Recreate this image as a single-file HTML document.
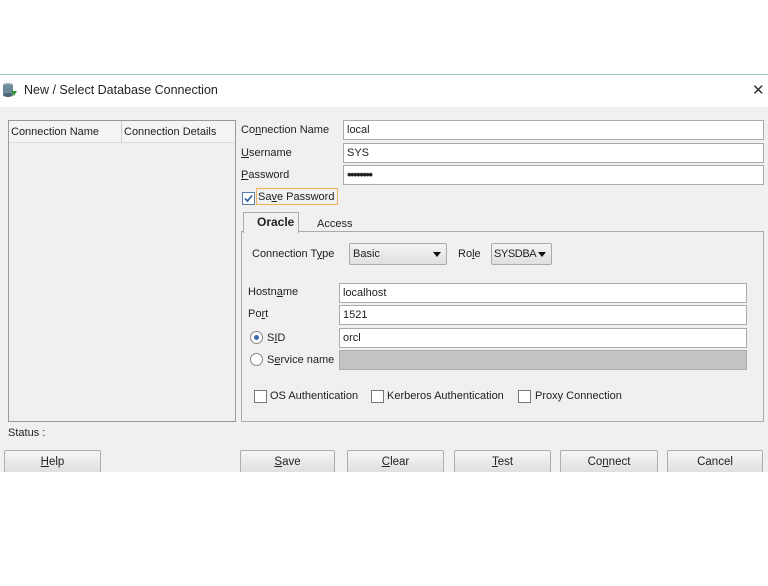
<!DOCTYPE html>
<html><head><style>
body{margin:0;width:768px;height:586px;background:#fff;position:relative;overflow:hidden;font-family:"Liberation Sans",sans-serif;font-size:11px;color:#222}
.a{position:absolute}
.f{position:absolute;background:#fff;border:1px solid #aaa;box-sizing:border-box;padding:1px 3px;font-size:11px;line-height:17px}
.l{position:absolute;font-size:11px}
.btn{position:absolute;top:450px;height:24px;box-sizing:border-box;border:1px solid #adadad;border-radius:2px;background:linear-gradient(#f6f6f6,#dedede);text-align:center;line-height:22px;font-size:11.5px}
.cb{position:absolute;width:12px;height:12px;border:1px solid #777;background:#fff;box-sizing:border-box}
.cmb{position:absolute;height:22px;box-sizing:border-box;border:1px solid #aaa;border-radius:2px;background:linear-gradient(#f4f4f4,#e0e0e0);padding:4px 3px;font-size:11px}
.cmb:after{content:"";position:absolute;right:5px;top:8px;border-left:4px solid transparent;border-right:4px solid transparent;border-top:5px solid #111}
u{text-decoration:underline}
</style></head><body>
<div class="a" style="left:0;top:74px;width:768px;height:1px;background:#9cc8c8"></div>
<svg class="a" style="left:2px;top:82px" width="16" height="16"><ellipse cx="6" cy="3" rx="5" ry="2" fill="#8aa"/><rect x="1" y="3" width="10" height="10" fill="#6e8a9a"/><ellipse cx="6" cy="13" rx="5" ry="2" fill="#4d6676"/><path d="M9 9h6l-3 5z" fill="#2a9a3a"/></svg>
<div class="l" style="left:24px;top:83px;font-size:12.5px">New / Select Database Connection</div>
<div class="l" style="left:752px;top:81px;font-size:15px;color:#333">✕</div>
<div class="a" style="left:0;top:107px;width:768px;height:365px;background:#f0f0f0"></div>

<div class="a" style="left:8px;top:120px;width:228px;height:302px;border:1px solid #999;box-sizing:border-box;background:#f0f0f0"></div>
<div class="a" style="left:9px;top:121px;width:226px;height:21px;background:#f4f4f4;border-bottom:1px solid #ddd"></div>
<div class="a" style="left:121px;top:121px;width:1px;height:21px;background:#ccc"></div>
<div class="l" style="left:11px;top:126px">Connection Name</div>
<div class="l" style="left:124px;top:126px">Connection Details</div>

<div class="l" style="left:241px;top:124px">Co<u>n</u>nection Name</div>
<div class="l" style="left:241px;top:147px"><u>U</u>sername</div>
<div class="l" style="left:241px;top:169px"><u>P</u>assword</div>
<div class="f" style="left:343px;top:120px;width:421px;height:20px">local</div>
<div class="f" style="left:343px;top:143px;width:421px;height:20px">SYS</div>
<div class="f" style="left:343px;top:165px;width:421px;height:20px;font-weight:bold;font-size:13px;letter-spacing:-1.5px;line-height:16px">••••••••</div>
<div class="cb" style="left:242px;top:192px;width:13px;height:13px;border-color:#5a7fa8"></div>
<svg class="a" style="left:243px;top:193px" width="11" height="11"><path d="M2 5.5l2.5 2.5L9 2.5" stroke="#2a5fa0" stroke-width="1.6" fill="none"/></svg>
<div class="a" style="left:256px;top:188px;width:82px;height:17px;border:1px solid #f0b060;box-sizing:border-box"></div>
<div class="l" style="left:258px;top:191px">Sa<u>v</u>e Password</div>

<div class="a" style="left:241px;top:231px;width:523px;height:191px;border:1px solid #aaa;box-sizing:border-box"></div>
<div class="a" style="left:243px;top:212px;width:56px;height:21px;border:1px solid #aaa;border-bottom:none;box-sizing:border-box;background:#f0f0f0"></div>
<div class="l" style="left:257px;top:215px;font-weight:bold;font-size:12px">Oracle</div>
<div class="l" style="left:317px;top:218px">Access</div>

<div class="l" style="left:252px;top:248px">Connection T<u>y</u>pe</div>
<div class="cmb" style="left:349px;top:243px;width:98px">Basic</div>
<div class="l" style="left:458px;top:248px">Ro<u>l</u>e</div>
<div class="cmb" style="left:491px;top:243px;width:61px;padding-left:2px;letter-spacing:-0.4px">SYSDBA</div>

<div class="l" style="left:248px;top:286px">Hostn<u>a</u>me</div>
<div class="l" style="left:248px;top:308px">Po<u>r</u>t</div>
<div class="a" style="left:250px;top:331px;width:11px;height:11px;border:1px solid #888;border-radius:50%;background:#fff"></div>
<div class="a" style="left:254px;top:335px;width:5px;height:5px;border-radius:50%;background:#3a6fb0"></div>
<div class="l" style="left:267px;top:332px">S<u>I</u>D</div>
<div class="a" style="left:250px;top:353px;width:11px;height:11px;border:1px solid #888;border-radius:50%;background:#fff"></div>
<div class="l" style="left:267px;top:354px">S<u>e</u>rvice name</div>
<div class="f" style="left:339px;top:283px;width:408px;height:20px">localhost</div>
<div class="f" style="left:339px;top:305px;width:408px;height:20px">1521</div>
<div class="f" style="left:339px;top:328px;width:408px;height:20px">orcl</div>
<div class="f" style="left:339px;top:350px;width:408px;height:20px;background:#c4c4c4"></div>

<div class="cb" style="left:254px;top:390px;width:13px;height:13px"></div>
<div class="l" style="left:270px;top:390px">OS Authentication</div>
<div class="cb" style="left:371px;top:390px;width:13px;height:13px"></div>
<div class="l" style="left:387px;top:390px">Kerberos Authentication</div>
<div class="cb" style="left:518px;top:390px;width:13px;height:13px"></div>
<div class="l" style="left:535px;top:390px">Proxy Connection</div>

<div class="l" style="left:8px;top:427px">Status :</div>
<div class="btn" style="left:4px;width:97px"><u>H</u>elp</div>
<div class="btn" style="left:240px;width:95px"><u>S</u>ave</div>
<div class="btn" style="left:347px;width:97px"><u>C</u>lear</div>
<div class="btn" style="left:454px;width:97px"><u>T</u>est</div>
<div class="btn" style="left:560px;width:98px">Co<u>n</u>nect</div>
<div class="btn" style="left:667px;width:96px">Cancel</div>
<div class="a" style="left:0;top:472px;width:768px;height:114px;background:#fff"></div>
</body></html>
